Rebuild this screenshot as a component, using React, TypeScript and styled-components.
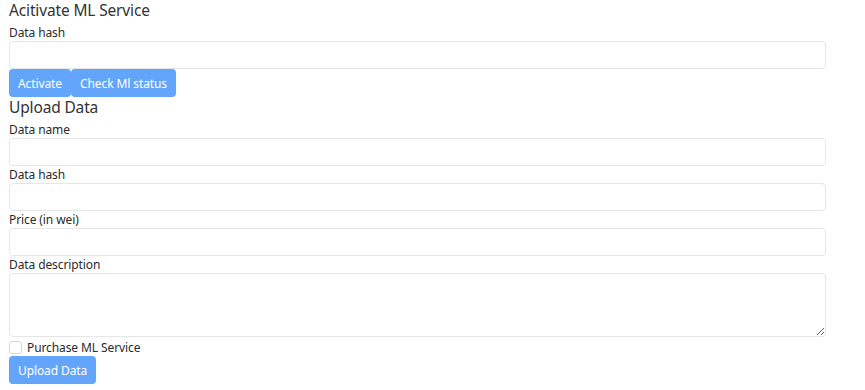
import React from "react";
import styled, { createGlobalStyle } from "styled-components";

const Global = createGlobalStyle`
  html, body { margin: 0; padding: 0; background: #ffffff; }
  body { font-family: "Noto Sans", "Open Sans", sans-serif; color: #212529; }
  * { box-sizing: border-box; }
`;

const Page = styled.div`
  width: 817px;
  margin-left: 9px;
  display: flex;
  flex-direction: column;
`;

const Heading = styled.h3`
  margin: 0;
  font-size: 15.5px;
  font-weight: 400;
  line-height: 21px;
  height: 24px;
  letter-spacing: -0.15px;
  color: #333333;
`;

const Label = styled.label`
  display: block;
  font-size: 12px;
  line-height: 17px;
  height: 17px;
  letter-spacing: -0.1px;
  color: #2b2b2b;
`;

const Input = styled.input`
  display: block;
  width: 100%;
  height: 28px;
  border: 1px solid #e4e6e8;
  border-radius: 4px;
  background: #fff;
  padding: 0 8px;
  font: inherit;
  outline: none;
`;

const TextArea = styled.textarea`
  display: block;
  width: 100%;
  height: 64px;
  border: 1px solid #e4e6e8;
  border-radius: 4px;
  background: #fff;
  padding: 4px 8px;
  font: inherit;
  outline: none;
  resize: vertical;
`;

const ButtonRow = styled.div`
  display: flex;
  height: 28px;
`;

const Button = styled.button`
  height: 28px;
  padding: 0 9px;
  border: none;
  border-radius: 4px;
  background: #63a5fb;
  color: #ffffff;
  font-family: "Noto Sans", "Open Sans", sans-serif;
  font-size: 12px;
  letter-spacing: -0.1px;
  cursor: pointer;
`;

const CheckRow = styled.label`
  display: flex;
  align-items: center;
  gap: 5px;
  height: 17px;
  margin-top: 2px;
  font-size: 12px;
  letter-spacing: -0.1px;
  color: #2b2b2b;
`;

const Box = styled.span`
  width: 13px;
  height: 13px;
  border: 1px solid #d4d6d8;
  border-radius: 3px;
  background: #fff;
  display: inline-block;
`;

const BottomButton = styled(Button)`
  align-self: flex-start;
`;

export default function App() {
  return (
    <>
      <Global />
      <Page>
        <Heading>Acitivate ML Service</Heading>
        <Label>Data hash</Label>
        <Input />
        <ButtonRow>
          <Button>Activate</Button>
          <Button>Check Ml status</Button>
        </ButtonRow>
        <Heading>Upload Data</Heading>
        <Label>Data name</Label>
        <Input />
        <Label>Data hash</Label>
        <Input />
        <Label>Price (in wei)</Label>
        <Input />
        <Label>Data description</Label>
        <TextArea />
        <CheckRow>
          <Box />
          Purchase ML Service
        </CheckRow>
        <BottomButton>Upload Data</BottomButton>
      </Page>
    </>
  );
}
